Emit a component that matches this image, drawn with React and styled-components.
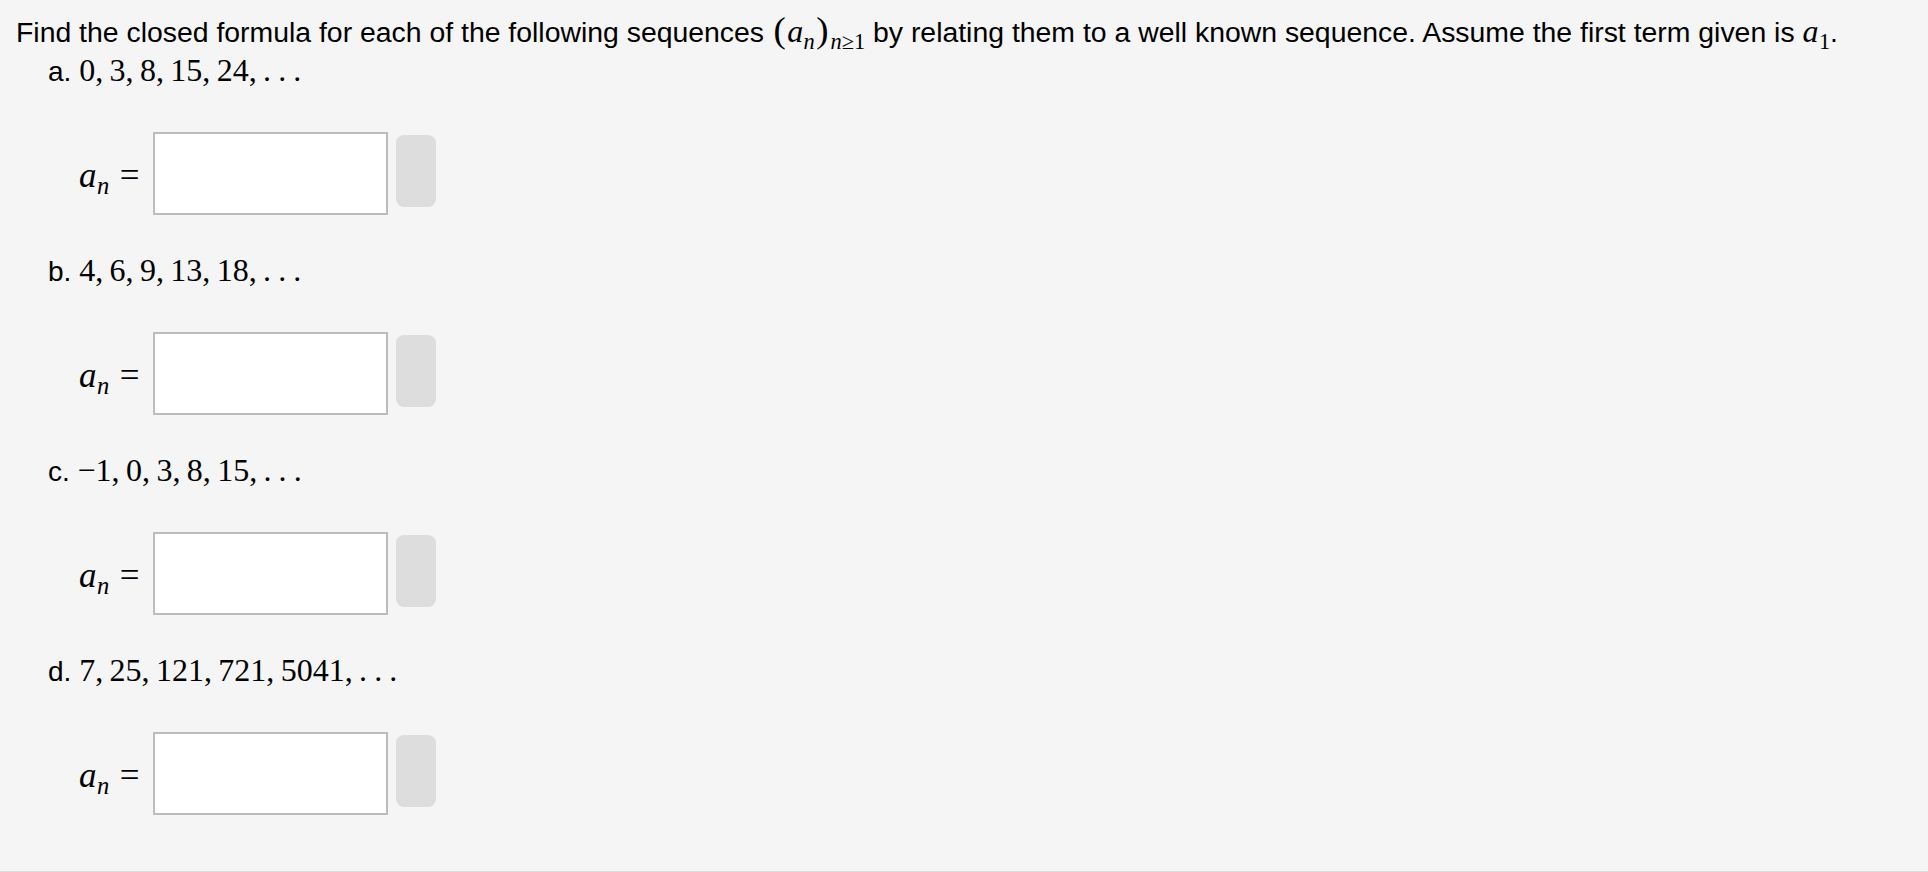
import React from 'react'
import styled, {createGlobalStyle} from 'styled-components'

const parts = [
  {letter: 'a', terms: ['0', '3', '8', '15', '24']},
  {letter: 'b', terms: ['4', '6', '9', '13', '18']},
  {letter: 'c', terms: ['\u22121', '0', '3', '8', '15']},
  {letter: 'd', terms: ['7', '25', '121', '721', '5041']},
]

const GlobalStyle = createGlobalStyle`
  html, body {
    margin: 0;
    padding: 0;
    background: #f5f5f5;
  }
`

const Sequence = ({terms}) => (
  <Math>
    {terms.map(term => (
      <React.Fragment key={term}>
        {term}<Comma>,</Comma>
      </React.Fragment>
    ))}
    <Dots>...</Dots>
  </Math>
)

const App = () => {
  return (
    <Page>
      <GlobalStyle />
      <Heading>
        Find the closed formula for each of the following sequences{' '}
        <Math>
          <Paren>(</Paren><Mi>a</Mi><Sub><Mi>n</Mi></Sub><Paren>)</Paren><Sub><Mi>n</Mi>≥1</Sub>
        </Math>{' '}
        by relating them to a well known sequence. Assume the first term given is{' '}
        <Math><Mi>a</Mi><Sub>1</Sub></Math>.
      </Heading>
      {parts.map(part => (
        <Part key={part.letter}>
          <PartLabel>
            {part.letter}. <Sequence terms={part.terms} />
          </PartLabel>
          <AnswerRow>
            <AnswerLabel>
              <Mi>a</Mi><Sub><Mi>n</Mi></Sub><Equals>=</Equals>
            </AnswerLabel>
            <AnswerInput type="text" aria-label={`answer ${part.letter}`} />
            <PreviewButton aria-label="preview" />
          </AnswerRow>
        </Part>
      ))}
    </Page>
  )
}

const Page = styled.div`
  box-sizing: border-box;
  height: 872px;
  padding-top: 12px;
  border-bottom: 1px solid #dddddd;
  font-family: "Liberation Sans", Arial, sans-serif;
  color: #000;
`

const Heading = styled.div`
  padding-left: 16px;
  font-size: 28.4px;
  line-height: 40px;
  white-space: nowrap;
`

const Math = styled.span`
  font-family: "Liberation Serif", "DejaVu Serif", serif;
  font-size: 32px;
  line-height: 1;
`

const Paren = styled.span`
  font-size: 1.15em;
  margin: 0 0.04em;
`

const Mi = styled.i`
  font-style: italic;
`

const Sub = styled.span`
  font-size: 0.7em;
  position: relative;
  top: 0.3em;
  margin-left: 0.02em;
`

const Comma = styled.span`
  margin-right: 0.2em;
`

const Dots = styled.span`
  letter-spacing: 0.22em;
`

const Part = styled.div`
  display: flex;
  flex-direction: column;
  padding-bottom: 37px;
  &:first-of-type {
    margin-top: 1px;
  }
`

const PartLabel = styled.div`
  padding-left: 48px;
  font-size: 28px;
  line-height: 40px;
  height: 40px;
  white-space: nowrap;
`

const AnswerRow = styled.div`
  display: flex;
  align-items: center;
  margin-top: 40px;
  padding-left: 79px;
  height: 83px;
`

const AnswerLabel = styled.span`
  font-family: "Liberation Serif", "DejaVu Serif", serif;
  font-size: 35px;
  line-height: 1;
  width: 74px;
  margin-top: 4px;
  white-space: nowrap;
`

const Equals = styled.span`
  margin-left: 0.3em;
`

const AnswerInput = styled.input`
  box-sizing: border-box;
  width: 235px;
  height: 83px;
  margin: 0;
  border: 2px solid #bcbcbc;
  border-radius: 0;
  background: #ffffff;
  font-size: 24px;
  outline: none;
`

const PreviewButton = styled.button`
  width: 40px;
  height: 72px;
  margin: 0 0 5px 8px;
  padding: 0;
  border: none;
  border-radius: 8px;
  background: #dddddd;
`

export default App
